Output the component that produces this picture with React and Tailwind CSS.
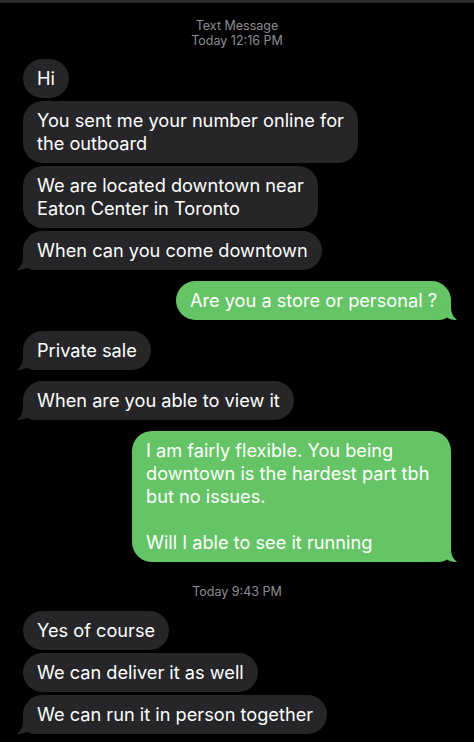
import React from "react";

const font = { fontFamily: "Inter, 'Liberation Sans', sans-serif" };

function LeftTail() {
  return (
    <svg className="absolute left-[-6px] bottom-0" width="28" height="22" viewBox="0 0 28 22">
      <path d="M6 0 H28 V22 H18 C14.5 22 12 21 10 19.5 C7 21.5 3.5 22 0 22 C3.5 19 6 15 6 9 Z" fill="#262628" />
    </svg>
  );
}

function RightTail() {
  return (
    <svg className="absolute right-[-6px] bottom-0 -scale-x-100" width="28" height="22" viewBox="0 0 28 22">
      <path d="M6 0 H28 V22 H18 C14.5 22 12 21 10 19.5 C7 21.5 3.5 22 0 22 C3.5 19 6 15 6 9 Z" fill="#65c466" />
    </svg>
  );
}

function In({ children, tail, className = "" }) {
  return (
    <div className={"flex justify-start pl-[23px] " + className}>
      <div className="relative">
        {tail && <LeftTail />}
        <div className="relative rounded-[20px] bg-[#262628] px-[14px] py-[8px] text-[18.2px] leading-[23px] text-white">
          {children}
        </div>
      </div>
    </div>
  );
}

function Out({ children, className = "", bubbleClass = "" }) {
  return (
    <div className={"flex justify-end pr-[23px] " + className}>
      <div className="relative">
        <RightTail />
        <div className={"relative rounded-[20px] bg-[#65c466] px-[14px] py-[8px] text-[18.2px] leading-[23px] text-white " + bubbleClass}>
          {children}
        </div>
      </div>
    </div>
  );
}

export default function App() {
  return (
    <div className="min-h-[742px] w-[474px] overflow-hidden bg-black" style={font}>
      <div className="h-[3px] bg-[#2a2a2a]" />
      <div className="mt-[15px] text-center text-[12.5px] leading-[15px] text-[#8e8e93]">
        <div>Text Message</div>
        <div>Today 12:16 PM</div>
      </div>
      <In className="mt-[11px]">Hi</In>
      <In className="mt-[3px]">
        You sent me your number online for
        <br />
        the outboard
      </In>
      <In className="mt-[3px]">
        We are located downtown near
        <br />
        Eaton Center in Toronto
      </In>
      <In className="mt-[3px]" tail>
        When can you come downtown
      </In>
      <Out className="mt-[11px]">Are you a store or personal ?</Out>
      <In className="mt-[11px]" tail>
        Private sale
      </In>
      <In className="mt-[11px]" tail>
        When are you able to view it
      </In>
      <Out className="mt-[11px]" bubbleClass="w-[319px]">
        I am fairly flexible. You being
        <br />
        downtown is the hardest part tbh
        <br />
        but no issues.
        <br />
        <br />
        Will I able to see it running
      </Out>
      <div className="mt-[22px] text-center text-[12.5px] leading-[15px] text-[#8e8e93]">Today 9:43 PM</div>
      <In className="mt-[12px]">Yes of course</In>
      <In className="mt-[3px]">We can deliver it as well</In>
      <In className="mt-[3px]" tail>
        We can run it in person together
      </In>
    </div>
  );
}
